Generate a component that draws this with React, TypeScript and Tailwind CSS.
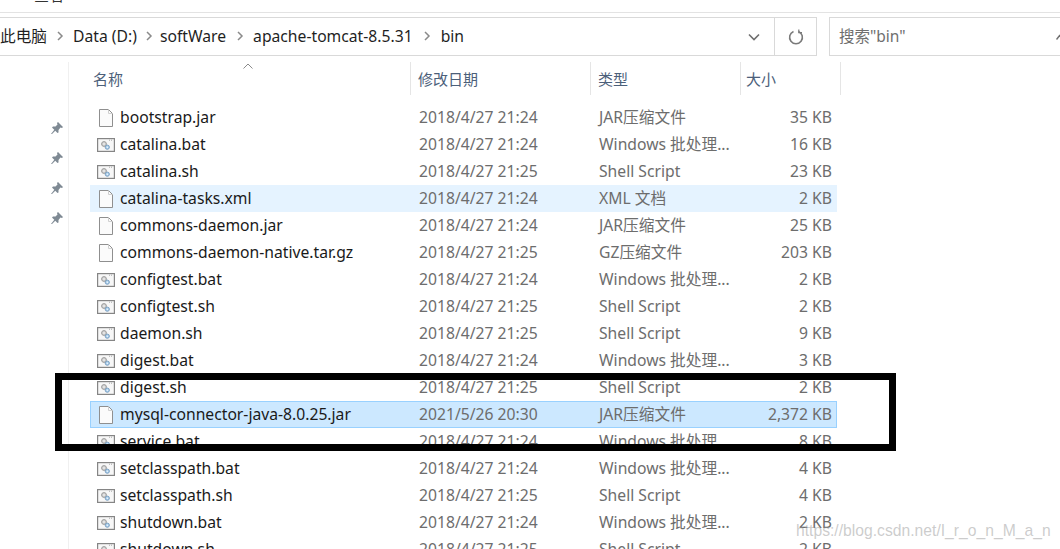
const font = { fontFamily: '"Noto Sans", "Noto Sans CJK SC", sans-serif' };

type Row = { name: string; date: string; type: string; size: string; icon: "file" | "script"; state?: "hover" | "selected" };

const BAT = "Windows 批处理...";
const JAR = "JAR压缩文件";
const SH = "Shell Script";

const rows: Row[] = [
  { name: "bootstrap.jar", date: "2018/4/27 21:24", type: JAR, size: "35 KB", icon: "file" },
  { name: "catalina.bat", date: "2018/4/27 21:24", type: BAT, size: "16 KB", icon: "script" },
  { name: "catalina.sh", date: "2018/4/27 21:25", type: SH, size: "23 KB", icon: "script" },
  { name: "catalina-tasks.xml", date: "2018/4/27 21:24", type: "XML 文档", size: "2 KB", icon: "file", state: "hover" },
  { name: "commons-daemon.jar", date: "2018/4/27 21:24", type: JAR, size: "25 KB", icon: "file" },
  { name: "commons-daemon-native.tar.gz", date: "2018/4/27 21:25", type: "GZ压缩文件", size: "203 KB", icon: "file" },
  { name: "configtest.bat", date: "2018/4/27 21:24", type: BAT, size: "2 KB", icon: "script" },
  { name: "configtest.sh", date: "2018/4/27 21:25", type: SH, size: "2 KB", icon: "script" },
  { name: "daemon.sh", date: "2018/4/27 21:25", type: SH, size: "9 KB", icon: "script" },
  { name: "digest.bat", date: "2018/4/27 21:24", type: BAT, size: "3 KB", icon: "script" },
  { name: "digest.sh", date: "2018/4/27 21:25", type: SH, size: "2 KB", icon: "script" },
  { name: "mysql-connector-java-8.0.25.jar", date: "2021/5/26 20:30", type: JAR, size: "2,372 KB", icon: "file", state: "selected" },
  { name: "service.bat", date: "2018/4/27 21:24", type: BAT, size: "8 KB", icon: "script" },
  { name: "setclasspath.bat", date: "2018/4/27 21:24", type: BAT, size: "4 KB", icon: "script" },
  { name: "setclasspath.sh", date: "2018/4/27 21:25", type: SH, size: "4 KB", icon: "script" },
  { name: "shutdown.bat", date: "2018/4/27 21:24", type: BAT, size: "2 KB", icon: "script" },
  { name: "shutdown.sh", date: "2018/4/27 21:25", type: SH, size: "2 KB", icon: "script" },
];

function FileIcon() {
  return (
    <svg width="18" height="18" viewBox="0 0 18 18" fill="none">
      <path d="M2.5 0.5H11.5L15.5 4.5V17.5H2.5Z" fill="#fbfbfb" stroke="#8f8f8f" />
      <path d="M11.5 0.5V4.5H15.5" stroke="#d0d0d0" />
    </svg>
  );
}

function ScriptIcon() {
  return (
    <svg width="18" height="14" viewBox="0 0 18 14" fill="none">
      <rect x="0.6" y="0.6" width="16.8" height="12.8" fill="#f7f7f7" stroke="#858585" strokeWidth="1.2" />
      <path d="M12 2.2H16" stroke="#a8a8a8" strokeDasharray="1 1" />
      <circle cx="7" cy="6" r="2.4" fill="#d4d4d4" stroke="#9a9a9a" />
      <circle cx="7" cy="6" r="0.8" fill="#f7f7f7" />
      <circle cx="10.3" cy="9.2" r="2.1" fill="#a9cdea" stroke="#7fa3c4" />
      <circle cx="10.3" cy="9.2" r="0.7" fill="#f2f8fd" />
    </svg>
  );
}

function Pin() {
  return (
    <svg width="14" height="14" viewBox="0 0 14 14" fill="#7f8a94">
      <path d="M8 1L13 6L12 7L10.5 6.5L8.5 9L8.5 11.5L7.5 12L2 6.5L3 5.5H5.5L7.5 3.5L7 2Z" />
      <path d="M4.5 8.5L5.5 9.5L2 13L1 13Z" />
    </svg>
  );
}

function Chevron() {
  return (
    <svg width="8" height="10" viewBox="0 0 8 10" fill="none" stroke="#8a8a8a" strokeWidth="1.5">
      <path d="M2 1L6 5L2 9" />
    </svg>
  );
}

function Crumb({ label, className }: { label: string; className: string }) {
  return (
    <div className={`flex items-center ${className}`}>
      <span>{label}</span>
      <Chevron />
    </div>
  );
}

function FileRow({ row }: { row: Row }) {
  const bg =
    row.state === "selected"
      ? "bg-[#cce8ff] border border-[#99d1ff]"
      : row.state === "hover"
        ? "bg-[#e5f3ff] border border-[#e5f3ff]"
        : "border border-transparent";
  return (
    <div className={`flex h-[27px] w-[747px] shrink-0 items-center text-[15.7px] text-[#6d6d6d] ${bg}`}>
      <div className="flex w-[29px] shrink-0 justify-center">
        {row.icon === "file" ? <FileIcon /> : <ScriptIcon />}
      </div>
      <div className="w-[299px] shrink-0 whitespace-nowrap text-[#1a1a1a]">{row.name}</div>
      <div className="w-[180px] shrink-0 whitespace-nowrap">{row.date}</div>
      <div className="w-[150px] shrink-0 whitespace-nowrap">{row.type}</div>
      <div className="w-[83px] shrink-0 whitespace-nowrap text-right">{row.size}</div>
    </div>
  );
}

export default function App() {
  return (
    <div className="relative h-[549px] w-[1060px] overflow-hidden bg-white" style={font}>
      {/* menu strip, cut off by the crop */}
      <div className="h-[13px] overflow-hidden border-b border-[#e3e3e3]">
        <div className="-mt-[15px] pl-[34px] text-[15px] leading-[20px] text-[#333]">查看</div>
      </div>

      {/* address + search */}
      <div className="mt-[4px] flex h-[39px]">
        <div className="flex w-[817px] items-center border-y border-r border-[#d9d9d9] text-[15.7px] text-[#1f1f1f]">
          <div className="flex flex-1 items-center overflow-hidden">
            <Crumb label="此电脑" className="mr-[9px] gap-[9px]" />
            <Crumb label="Data (D:)" className="mr-[7px] gap-[8px]" />
            <Crumb label="softWare" className="mr-[9px] gap-[10px]" />
            <Crumb label="apache-tomcat-8.5.31" className="mr-[10px] gap-[10px]" />
            <span>bin</span>
          </div>
          <div className="flex h-full w-[40px] items-center justify-center">
            <svg width="12" height="8" viewBox="0 0 12 8" fill="none" stroke="#6f6f6f" strokeWidth="1.6">
              <path d="M1 1.5L6 6.5L11 1.5" />
            </svg>
          </div>
          <div className="flex h-full w-[42px] items-center justify-center border-l border-[#d9d9d9]">
            <svg width="16" height="16" viewBox="0 0 16 16" fill="none" stroke="#7a7a7a" strokeWidth="1.6">
              <path d="M5.5 2.4A6.4 6.4 0 1 0 10.5 2.4" />
              <path d="M10.8 0.4V3.6H14" strokeWidth="1.2" />
            </svg>
          </div>
        </div>
        <div className="ml-[12px] flex flex-1 items-center justify-between border-y border-l border-[#d9d9d9] pl-[9px] text-[15.5px] text-[#6f6f6f]">
          <span>搜索"bin"</span>
          <svg width="4" height="6" viewBox="0 0 4 6" fill="none" stroke="#6f6f6f" strokeWidth="1.4">
            <path d="M0.5 5.5L4 1" />
          </svg>
        </div>
      </div>

      <div className="mt-[6px] flex">
        {/* quick access pins */}
        <div className="flex h-[500px] w-[69px] shrink-0 flex-col items-end gap-[16px] border-r border-[#f0f0f0] pr-[4px] pt-[59px]">
          <Pin />
          <Pin />
          <Pin />
          <Pin />
        </div>

        <div className="flex min-w-0 flex-1 flex-col pl-[21px]">
          {/* column headers */}
          <div className="relative flex h-[33px] w-[751px] text-[15px] text-[#4c607a]">
            <div className="flex w-[321px] items-center border-r border-[#e5e5e5] pl-[3px] pt-[2px]">名称</div>
            <div className="flex w-[180px] items-center border-r border-[#e5e5e5] pl-[7px] pt-[2px]">修改日期</div>
            <div className="flex w-[150px] items-center border-r border-[#e5e5e5] pl-[7px] pt-[2px]">类型</div>
            <div className="flex w-[100px] items-center border-r border-[#e5e5e5] pl-[5px] pt-[2px]">大小</div>
            <svg className="absolute left-[152px] top-[1px]" width="12" height="6" viewBox="0 0 12 6" fill="none" stroke="#8a8a8a">
              <path d="M1.5 5.5L6 1L10.5 5.5" />
            </svg>
          </div>
          <div className="mt-[9px] flex flex-col">
            {rows.map((row) => (
              <FileRow key={row.name} row={row} />
            ))}
          </div>
        </div>
      </div>

      {/* hand-drawn annotation over the list */}
      <div className="absolute left-[55px] top-[373px] h-[78px] w-[841px] border-[7px] border-black" />

      <div
        className="absolute left-[796px] top-[521px] whitespace-nowrap text-[15.7px] leading-[20px] text-[#9a9a9a]/50"
        style={{ fontFamily: '"Liberation Sans", sans-serif' }}
      >
        https://blog.csdn.net/I_r_o_n_M_a_n
      </div>
    </div>
  );
}
